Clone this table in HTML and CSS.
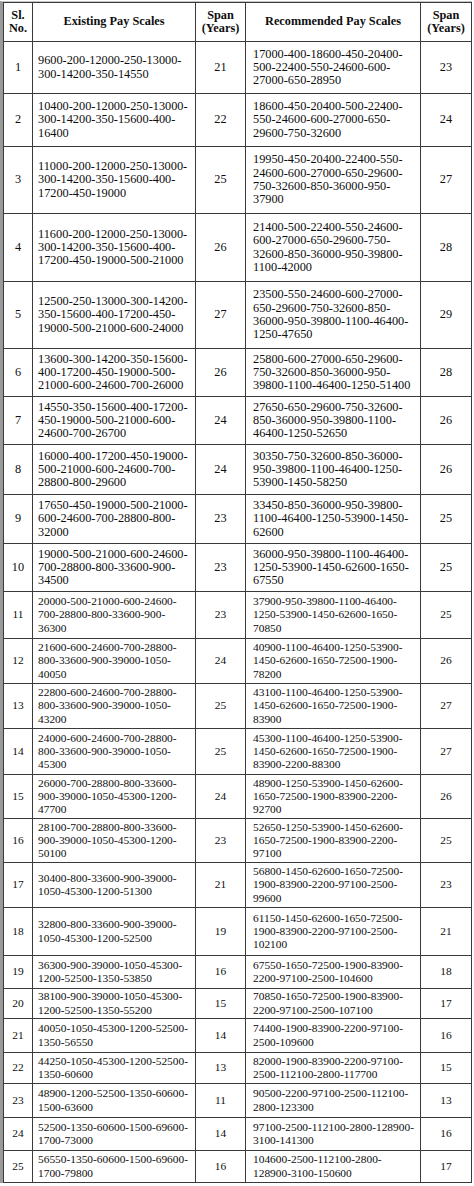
FILE: index.html
```html
<!DOCTYPE html>
<html lang="en">
<head>
<meta charset="utf-8">
<title>Pay Scales</title>
<link rel="stylesheet" href="styles.css">
</head>
<body>
<div class="page">
<table class="pay">
<colgroup>
<col class="c-sl"><col class="c-ex"><col class="c-sp"><col class="c-rec"><col class="c-sp2">
</colgroup>
<thead>
<tr>
<th>Sl.<br>No.</th>
<th>Existing Pay Scales</th>
<th>Span<br>(Years)</th>
<th>Recommended Pay Scales</th>
<th>Span<br>(Years)</th>
</tr>
</thead>
<tbody>
<tr><td class="sl">1</td><td class="sc">9600-200-12000-250-13000-<br>300-14200-350-14550</td><td class="sp">21</td><td class="sc rec">17000-400-18600-450-20400-<br>500-22400-550-24600-600-<br>27000-650-28950</td><td class="sp">23</td></tr>
<tr><td class="sl">2</td><td class="sc">10400-200-12000-250-13000-<br>300-14200-350-15600-400-<br>16400</td><td class="sp">22</td><td class="sc rec">18600-450-20400-500-22400-<br>550-24600-600-27000-650-<br>29600-750-32600</td><td class="sp">24</td></tr>
<tr><td class="sl">3</td><td class="sc">11000-200-12000-250-13000-<br>300-14200-350-15600-400-<br>17200-450-19000</td><td class="sp">25</td><td class="sc rec">19950-450-20400-22400-550-<br>24600-600-27000-650-29600-<br>750-32600-850-36000-950-<br>37900</td><td class="sp">27</td></tr>
<tr><td class="sl">4</td><td class="sc">11600-200-12000-250-13000-<br>300-14200-350-15600-400-<br>17200-450-19000-500-21000</td><td class="sp">26</td><td class="sc rec">21400-500-22400-550-24600-<br>600-27000-650-29600-750-<br>32600-850-36000-950-39800-<br>1100-42000</td><td class="sp">28</td></tr>
<tr><td class="sl">5</td><td class="sc">12500-250-13000-300-14200-<br>350-15600-400-17200-450-<br>19000-500-21000-600-24000</td><td class="sp">27</td><td class="sc rec">23500-550-24600-600-27000-<br>650-29600-750-32600-850-<br>36000-950-39800-1100-46400-<br>1250-47650</td><td class="sp">29</td></tr>
<tr><td class="sl">6</td><td class="sc">13600-300-14200-350-15600-<br>400-17200-450-19000-500-<br>21000-600-24600-700-26000</td><td class="sp">26</td><td class="sc rec">25800-600-27000-650-29600-<br>750-32600-850-36000-950-<br>39800-1100-46400-1250-51400</td><td class="sp">28</td></tr>
<tr><td class="sl">7</td><td class="sc">14550-350-15600-400-17200-<br>450-19000-500-21000-600-<br>24600-700-26700</td><td class="sp">24</td><td class="sc rec">27650-650-29600-750-32600-<br>850-36000-950-39800-1100-<br>46400-1250-52650</td><td class="sp">26</td></tr>
<tr><td class="sl">8</td><td class="sc">16000-400-17200-450-19000-<br>500-21000-600-24600-700-<br>28800-800-29600</td><td class="sp">24</td><td class="sc rec">30350-750-32600-850-36000-<br>950-39800-1100-46400-1250-<br>53900-1450-58250</td><td class="sp">26</td></tr>
<tr><td class="sl">9</td><td class="sc">17650-450-19000-500-21000-<br>600-24600-700-28800-800-<br>32000</td><td class="sp">23</td><td class="sc rec">33450-850-36000-950-39800-<br>1100-46400-1250-53900-1450-<br>62600</td><td class="sp">25</td></tr>
<tr><td class="sl">10</td><td class="sc">19000-500-21000-600-24600-<br>700-28800-800-33600-900-<br>34500</td><td class="sp">23</td><td class="sc rec">36000-950-39800-1100-46400-<br>1250-53900-1450-62600-1650-<br>67550</td><td class="sp">25</td></tr>
<tr><td class="sl">11</td><td class="sc">20000-500-21000-600-24600-<br>700-28800-800-33600-900-<br>36300</td><td class="sp">23</td><td class="sc rec">37900-950-39800-1100-46400-<br>1250-53900-1450-62600-1650-<br>70850</td><td class="sp">25</td></tr>
<tr><td class="sl">12</td><td class="sc">21600-600-24600-700-28800-<br>800-33600-900-39000-1050-<br>40050</td><td class="sp">24</td><td class="sc rec">40900-1100-46400-1250-53900-<br>1450-62600-1650-72500-1900-<br>78200</td><td class="sp">26</td></tr>
<tr><td class="sl">13</td><td class="sc">22800-600-24600-700-28800-<br>800-33600-900-39000-1050-<br>43200</td><td class="sp">25</td><td class="sc rec">43100-1100-46400-1250-53900-<br>1450-62600-1650-72500-1900-<br>83900</td><td class="sp">27</td></tr>
<tr><td class="sl">14</td><td class="sc">24000-600-24600-700-28800-<br>800-33600-900-39000-1050-<br>45300</td><td class="sp">25</td><td class="sc rec">45300-1100-46400-1250-53900-<br>1450-62600-1650-72500-1900-<br>83900-2200-88300</td><td class="sp">27</td></tr>
<tr><td class="sl">15</td><td class="sc">26000-700-28800-800-33600-<br>900-39000-1050-45300-1200-<br>47700</td><td class="sp">24</td><td class="sc rec">48900-1250-53900-1450-62600-<br>1650-72500-1900-83900-2200-<br>92700</td><td class="sp">26</td></tr>
<tr><td class="sl">16</td><td class="sc">28100-700-28800-800-33600-<br>900-39000-1050-45300-1200-<br>50100</td><td class="sp">23</td><td class="sc rec">52650-1250-53900-1450-62600-<br>1650-72500-1900-83900-2200-<br>97100</td><td class="sp">25</td></tr>
<tr><td class="sl">17</td><td class="sc">30400-800-33600-900-39000-<br>1050-45300-1200-51300</td><td class="sp">21</td><td class="sc rec">56800-1450-62600-1650-72500-<br>1900-83900-2200-97100-2500-<br>99600</td><td class="sp">23</td></tr>
<tr><td class="sl">18</td><td class="sc">32800-800-33600-900-39000-<br>1050-45300-1200-52500</td><td class="sp">19</td><td class="sc rec">61150-1450-62600-1650-72500-<br>1900-83900-2200-97100-2500-<br>102100</td><td class="sp">21</td></tr>
<tr><td class="sl">19</td><td class="sc">36300-900-39000-1050-45300-<br>1200-52500-1350-53850</td><td class="sp">16</td><td class="sc rec">67550-1650-72500-1900-83900-<br>2200-97100-2500-104600</td><td class="sp">18</td></tr>
<tr><td class="sl">20</td><td class="sc">38100-900-39000-1050-45300-<br>1200-52500-1350-55200</td><td class="sp">15</td><td class="sc rec">70850-1650-72500-1900-83900-<br>2200-97100-2500-107100</td><td class="sp">17</td></tr>
<tr><td class="sl">21</td><td class="sc">40050-1050-45300-1200-52500-<br>1350-56550</td><td class="sp">14</td><td class="sc rec">74400-1900-83900-2200-97100-<br>2500-109600</td><td class="sp">16</td></tr>
<tr><td class="sl">22</td><td class="sc">44250-1050-45300-1200-52500-<br>1350-60600</td><td class="sp">13</td><td class="sc rec">82000-1900-83900-2200-97100-<br>2500-112100-2800-117700</td><td class="sp">15</td></tr>
<tr><td class="sl">23</td><td class="sc">48900-1200-52500-1350-60600-<br>1500-63600</td><td class="sp">11</td><td class="sc rec">90500-2200-97100-2500-112100-<br>2800-123300</td><td class="sp">13</td></tr>
<tr><td class="sl">24</td><td class="sc">52500-1350-60600-1500-69600-<br>1700-73000</td><td class="sp">14</td><td class="sc rec">97100-2500-112100-2800-128900-<br>3100-141300</td><td class="sp">16</td></tr>
<tr><td class="sl">25</td><td class="sc">56550-1350-60600-1500-69600-<br>1700-79800</td><td class="sp">16</td><td class="sc rec">104600-2500-112100-2800-<br>128900-3100-150600</td><td class="sp">17</td></tr>
</tbody>
</table>
</div>
</body>
</html>
```
FILE: styles.css
```css
html, body {
  margin: 0;
  padding: 0;
  background: #ffffff;
}

.page {
  display: inline-block;
  margin: 1px 0 0 0;
  border-left: 3px solid #9a9a9a;
  border-top: 1px solid #c4c4c4;
}

.pay {
  border-collapse: collapse;
  table-layout: fixed;
  width: 468px;
  font-family: "Liberation Serif", "Times New Roman", serif;
  font-size: 12.3px;
  line-height: 13.3px;
  color: #0e0e0e;
  border: 1px solid #2e2e2e;
}

.c-sl { width: 29px; }
.c-ex { width: 163px; }
.c-sp { width: 50px; }
.c-rec { width: 175px; }
.c-sp2 { width: 51px; }

.pay th,
.pay td {
  border: 1px solid #3a3a3a;
  padding: 0;
  vertical-align: middle;
}

.pay th {
  font-weight: bold;
  text-align: center;
  height: 38px;
}

.pay td.sl,
.pay td.sp {
  text-align: center;
}

.pay td.sc {
  text-align: left;
  padding-left: 5px;
  white-space: nowrap;
  overflow: visible;
}

.pay td.rec {
  padding-left: 7px;
}

.pay tbody tr:nth-child(n+11) td {
  font-size: 11.4px;
}

.pay tbody tr:nth-child(1) { height: 52px; }
.pay tbody tr:nth-child(2) { height: 53px; }
.pay tbody tr:nth-child(3) { height: 67px; }
.pay tbody tr:nth-child(4) { height: 68px; }
.pay tbody tr:nth-child(5) { height: 67px; }
.pay tbody tr:nth-child(6) { height: 48px; }
.pay tbody tr:nth-child(7) { height: 48px; }
.pay tbody tr:nth-child(8) { height: 50px; }
.pay tbody tr:nth-child(9) { height: 49px; }
.pay tbody tr:nth-child(10) { height: 48px; }
.pay tbody tr:nth-child(11) { height: 47px; }
.pay tbody tr:nth-child(12) { height: 45px; }
.pay tbody tr:nth-child(13) { height: 45px; }
.pay tbody tr:nth-child(14) { height: 46px; }
.pay tbody tr:nth-child(15) { height: 44px; }
.pay tbody tr:nth-child(16) { height: 44px; }
.pay tbody tr:nth-child(17) { height: 45px; }
.pay tbody tr:nth-child(18) { height: 48px; }
.pay tbody tr:nth-child(19) { height: 33px; }
.pay tbody tr:nth-child(20) { height: 30px; }
.pay tbody tr:nth-child(21) { height: 34px; }
.pay tbody tr:nth-child(22) { height: 31px; }
.pay tbody tr:nth-child(23) { height: 34px; }
.pay tbody tr:nth-child(24) { height: 33px; }
.pay tbody tr:nth-child(25) { height: 32px; }
```
